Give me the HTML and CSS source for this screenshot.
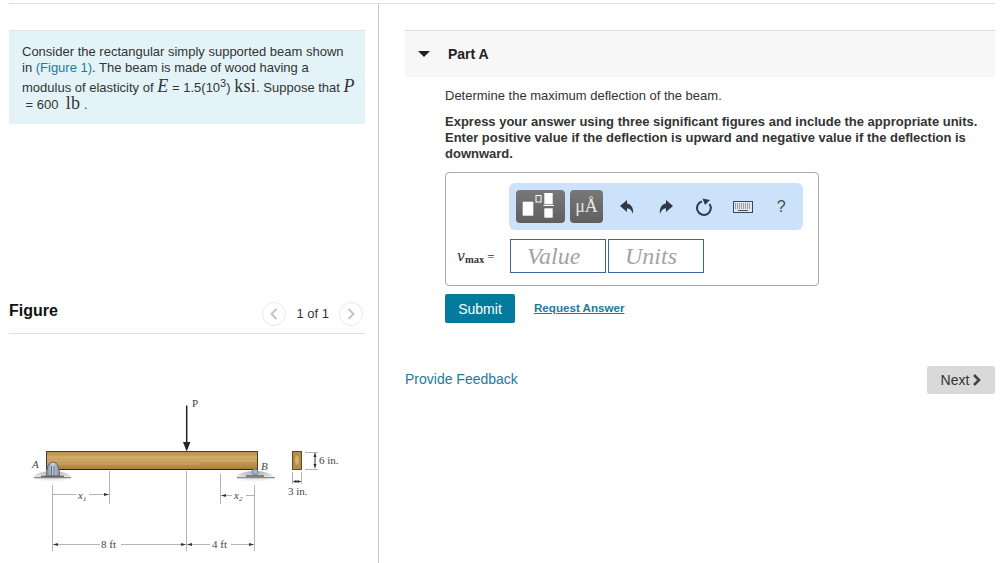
FILE: index.html
```html
<!DOCTYPE html>
<html lang="en">
<head>
    <meta charset="UTF-8">
    <meta name="viewport" content="width=device-width, initial-scale=1.0">
    <title>Part A</title>
    <link rel="stylesheet" href="styles.css">
</head>
<body>

<div class="top-rule"></div>

<div class="columns">
    <div class="left-col">
        <div class="intro">
            <div class="intro-line">Consider the rectangular simply supported beam shown</div>
            <div class="intro-line">in <a class="link">(Figure 1)</a>. The beam is made of wood having a</div>
            <div class="intro-line tall">modulus of elasticity of <i class="math">E</i> = 1.5(10<sup>3</sup>) <span class="math">ksi</span>. Suppose that <i class="math">P</i></div>
            <div class="intro-line last">&nbsp;= 600 &nbsp;<span class="math">lb</span> .</div>
        </div>

        <div class="figure-head">
            <h2>Figure</h2>
            <div class="pager">
                <span class="pager-btn">
                    <svg width="8" height="12" viewBox="0 0 8 12"><path d="M6.5 1 1.5 6l5 5" fill="none" stroke="#c4c4c4" stroke-width="2"/></svg>
                </span>
                <span class="pager-text">1 of 1</span>
                <span class="pager-btn">
                    <svg width="8" height="12" viewBox="0 0 8 12"><path d="M1.5 1l5 5-5 5" fill="none" stroke="#c4c4c4" stroke-width="2"/></svg>
                </span>
            </div>
        </div>

        <svg class="beam-figure" width="360" height="173" viewBox="0 390 360 173">
            <defs>
                <linearGradient id="wood" x1="0" y1="0" x2="0" y2="1">
                    <stop offset="0" stop-color="#b98d45"/>
                    <stop offset="0.35" stop-color="#d0a765"/>
                    <stop offset="0.6" stop-color="#c39a55"/>
                    <stop offset="1" stop-color="#a87c36"/>
                </linearGradient>
                <linearGradient id="metal" x1="0" y1="0" x2="1" y2="0">
                    <stop offset="0" stop-color="#7d8d9b"/>
                    <stop offset="0.5" stop-color="#c3d2df"/>
                    <stop offset="1" stop-color="#7d8d9b"/>
                </linearGradient>
                <radialGradient id="shade" cx="0.5" cy="0" r="0.8">
                    <stop offset="0" stop-color="#a8a8a8"/>
                    <stop offset="1" stop-color="#ffffff"/>
                </radialGradient>
            </defs>

            <!-- extension lines -->
            <g stroke="#b4b4b4" stroke-width="1">
                <path d="M52.5 478V551M109.5 471V504M186.5 471V551M220.5 474V504M254.5 480V551"/>
                <path d="M53 494.5H76M89 494.5H109M221 495.5H232M246 495.5H254"/>
                <path d="M53 544.5H100M121 544.5H186M187 544.5H210M231 544.5H254"/>
                <path d="M305 452.5H318M305 469.5H318M292.5 472V484M301.5 472V484"/>
            </g>

            <!-- dimension arrow heads -->
            <g fill="#333">
                <path d="M109 494.5l-5-1.500v3zM221 495.5l5-1.500v3zM53 544.5l5-1.500v3zM186 544.5l-5-1.500v3zM187 544.5l5-1.500v3zM254 544.5l-5-1.500v3z"/>
                <path d="M315 452l-1.500 5h3zM315 469l-1.500-5h3z"/>
                <path d="M292.500 481.500l4-1.500v3zM301.500 481.500l-4-1.500v3z"/>
            </g>
            <path d="M315 456V465M296 481.500H298" stroke="#333" stroke-width="1"/>

            <!-- beam -->
            <rect x="46.500" y="451.500" width="211" height="18" fill="url(#wood)" stroke="#4a3d22" stroke-width="1"/>
            <path d="M47 457H257M47 461H257M47 464H200" stroke="#dcbc85" stroke-width="0.800" opacity="0.700"/>
            <path d="M47 469.500H257" stroke="#2e2610" stroke-width="1.200"/>

            <!-- load -->
            <path d="M186.700 405.500V444" stroke="#222" stroke-width="1.500"/>
            <path d="M183 442h7.400l-3.700 9.500z" fill="#222"/>

            <!-- support A -->
            <ellipse cx="52.500" cy="478" rx="19" ry="7" fill="url(#shade)"/>
            <path d="M46.500 476c0-4 0.500-14 6.500-14s6.500 10 6.500 14z" fill="url(#metal)" stroke="#556" stroke-width="0.800"/>
            <path d="M51.500 466V476M54 466V476" stroke="#4d5a66" stroke-width="0.800"/>
            <path d="M41 476.500H64" stroke="#666" stroke-width="1.500"/>
            <path d="M34 477.700H71" stroke="#777" stroke-width="1"/>

            <!-- support B -->
            <ellipse cx="255" cy="478" rx="19" ry="7" fill="url(#shade)"/>
            <circle cx="255" cy="472" r="3" fill="#9db6cf" stroke="#566" stroke-width="0.600"/>
            <path d="M246 476H264" stroke="#666" stroke-width="1.500"/>
            <path d="M237 477.700H275" stroke="#777" stroke-width="1"/>

            <!-- cross section -->
            <rect x="292.500" y="451.500" width="9" height="18" fill="#b98d45" stroke="#5a4a28" stroke-width="1"/>
            <ellipse cx="297" cy="460" rx="2" ry="4.500" fill="#d6ae6e"/>

            <!-- labels -->
            <g class="fig-text">
                <text x="192" y="407">P</text>
                <text x="32" y="468" class="fig-italic">A</text>
                <text x="261" y="470" class="fig-italic">B</text>
                <text x="78" y="499" class="fig-italic">x<tspan class="fig-sub" dy="2">1</tspan></text>
                <text x="234" y="499" class="fig-italic">x<tspan class="fig-sub" dy="2">2</tspan></text>
                <text x="101" y="548">8 ft</text>
                <text x="212" y="548">4 ft</text>
                <text x="319" y="464">6 in.</text>
                <text x="288" y="495">3 in.</text>
            </g>
        </svg>
    </div>

    <div class="right-col">
        <div class="part-head">
            <span class="caret"></span>
            <h3>Part A</h3>
        </div>

        <div class="part-body">
            <p class="question">Determine the maximum deflection of the beam.</p>
            <p class="instructions">Express your answer using three significant figures and include the appropriate units. Enter positive value if the deflection is upward and negative value if the deflection is downward.</p>

            <div class="answer-box">
                <div class="toolbar">
                    <span class="tool-btn tool-templates">
                        <svg width="49" height="33" viewBox="0 0 49 33">
                            <rect x="6.700" y="11.700" width="10.600" height="14" fill="#fff"/>
                            <rect x="20" y="5.500" width="5" height="6.500" fill="none" stroke="#fff" stroke-width="1"/>
                            <rect x="28.300" y="3" width="8.400" height="11.300" fill="#fff"/>
                            <rect x="27.500" y="15" width="10.500" height="1" fill="#fff"/>
                            <rect x="28.300" y="18.300" width="8.400" height="9.400" fill="#fff"/>
                        </svg>
                    </span>
                    <span class="tool-btn tool-units">μÅ</span>
                    <span class="tool-icon">
                        <svg width="14" height="14" viewBox="0 0 14 14"><path d="M7 0 0 6l7 6V8.500c3 0 4.500 1.500 6 5.500 1-6-2-10-6-10.500z" fill="#2f3a46"/></svg>
                    </span>
                    <span class="tool-icon">
                        <svg width="14" height="14" viewBox="0 0 14 14"><path d="M7 0l7 6-7 6V8.500c-3 0-4.500 1.500-6 5.500-1-6 2-10 6-10.500z" fill="#2f3a46"/></svg>
                    </span>
                    <span class="tool-icon">
                        <svg width="18" height="20" viewBox="0 0 18 20"><path d="M7 4.400A6.900 6.900 0 1 0 14.500 7" fill="none" stroke="#2f3a46" stroke-width="2"/><path d="M7.500 1.500l7.500 1.500-5 5z" fill="#2f3a46"/></svg>
                    </span>
                    <span class="tool-icon">
                        <svg width="20" height="12" viewBox="0 0 20 12">
                            <rect x="0.500" y="0.500" width="19" height="11" fill="#e3e8ee" stroke="#3b4652"/>
                            <path d="M2 3H18M2 5H18M2 7H18" stroke="#47525e" stroke-width="1" stroke-dasharray="1 1"/>
                            <path d="M5 9.500H15" stroke="#47525e"/>
                        </svg>
                    </span>
                    <span class="tool-icon tool-help">?</span>
                </div>

                <div class="answer-row">
                    <span class="answer-label"><i class="answer-var">v</i><b>max</b> <span class="equals">=</span></span>
                    <span class="answer-input">Value</span>
                    <span class="answer-input units">Units</span>
                </div>
            </div>

            <div class="actions">
                <button class="submit">Submit</button>
                <a class="request">Request Answer</a>
            </div>
        </div>

        <div class="bottom-row">
            <a class="feedback">Provide Feedback</a>
            <button class="next">Next
                <svg width="9" height="12" viewBox="0 0 9 12"><path d="M2 1l5 5-5 5" fill="none" stroke="#444" stroke-width="2.600"/></svg>
            </button>
        </div>
    </div>
</div>

</body>
</html>
```

FILE: styles.css
```css
body {
    font-family: 'Liberation Sans', Arial, sans-serif;
    font-size: 14px;
    color: #333;
    background-color: white;
    margin: 0;
    padding: 0;
    height: 563px;
    overflow: hidden;
}

a {
    color: #1c7a9c;
}

.top-rule {
    height: 1px;
    margin: 3px 5px 0 9px;
    background-color: #dedede;
}

.columns {
    display: flex;
    height: 559px;
}

/* Left column */
.left-col {
    width: 356px;
    padding: 0 13px 0 9px;
    border-right: 1px solid #ccc;
}

.intro {
    margin-top: 26px;
    height: 80px;
    padding-top: 13px;
    padding-left: 13px;
    background-color: #e4f3f7;
    border-top: 1px solid #dde6e8;
    font-size: 13px;
    line-height: 16px;
    white-space: nowrap;
}

.intro-line {
    height: 16px;
}

.intro-line.tall {
    margin-top: 2px;
}

.intro-line.last {
    margin-top: 1px;
}

.math {
    font-family: 'Liberation Serif', serif;
    font-size: 18px;
    letter-spacing: 0.3px;
}

sup {
    font-size: 11px;
    line-height: 0;
}

.figure-head {
    display: flex;
    justify-content: space-between;
    align-items: center;
    height: 47px;
    margin-top: 162px;
    border-bottom: 1px solid #dedede;
}

.figure-head h2 {
    margin: 3px 0 0;
    font-size: 16px;
    color: #111;
}

.pager {
    display: flex;
    align-items: center;
    gap: 10px;
    margin-top: 8px;
    margin-right: 2px;
    font-size: 13px;
}

.pager-btn {
    display: flex;
    justify-content: center;
    align-items: center;
    width: 22px;
    height: 22px;
    border: 1px solid #eaeaea;
    border-radius: 50%;
}

.beam-figure {
    display: block;
    margin-left: -9px;
    margin-top: 56px;
}

.fig-text text {
    font-family: 'Liberation Serif', serif;
    font-size: 11px;
    fill: #444;
}

.fig-text .fig-italic {
    font-style: italic;
}

.fig-text .fig-sub {
    font-size: 7px;
}

/* Right column */
.right-col {
    width: 590px;
    margin-left: 26px;
}

.part-head {
    display: flex;
    align-items: center;
    height: 46px;
    margin-top: 26px;
    background-color: #f7f7f7;
    border-top: 1px solid #dedede;
}

.caret {
    width: 0;
    height: 0;
    margin-left: 13px;
    border-left: 6px solid transparent;
    border-right: 6px solid transparent;
    border-top: 6px solid #222;
}

.part-head h3 {
    margin: 0 0 0 18px;
    font-size: 14px;
    color: #222;
}

.part-body {
    padding-left: 40px;
}

.question {
    margin: 11px 0 0;
    line-height: 16px;
    font-size: 13px;
}

.instructions {
    margin: 10px 0 0;
    font-weight: bold;
    font-size: 13px;
    line-height: 16px;
}

.answer-box {
    width: 372px;
    height: 112px;
    margin-top: 10px;
    border: 1px solid #aaa;
    border-radius: 4px;
}

.toolbar {
    display: flex;
    align-items: center;
    width: 294px;
    height: 47px;
    margin: 10px 0 0 63px;
    background-color: #cce2fb;
    border-radius: 6px;
}

.tool-btn {
    display: flex;
    justify-content: center;
    align-items: center;
    height: 33px;
    border-radius: 4px;
    background: linear-gradient(#787878, #5f5f5f);
    color: #fff;
}

.tool-templates {
    width: 49px;
    margin-left: 7px;
}

.tool-units {
    width: 33px;
    margin-left: 5px;
    margin-right: 5px;
    font-family: 'Liberation Serif', serif;
    font-size: 18px;
    color: #e6e6e6;
}

.tool-icon {
    display: flex;
    justify-content: center;
    align-items: center;
    width: 38.500px;
}

.tool-help {
    font-size: 16px;
    color: #3d4a57;
}

.answer-row {
    display: flex;
    align-items: center;
    margin: 9px 0 0 11px;
}

.answer-label {
    width: 53px;
    font-family: 'Liberation Serif', serif;
    font-size: 12px;
}

.answer-var {
    font-family: 'DejaVu Serif', serif;
    font-size: 14px;
}

.answer-label b {
    font-size: 10.500px;
    vertical-align: -2px;
}

.equals {
    font-size: 13px;
}

.answer-input {
    width: 78px;
    height: 32px;
    padding-left: 16px;
    border: 1px solid #3f62a8;
    font-family: 'Liberation Serif', serif;
    font-style: italic;
    font-size: 24px;
    line-height: 32px;
    color: #a3a3a3;
}

.answer-input.units {
    margin-left: 2px;
}

.actions {
    display: flex;
    align-items: center;
    margin-top: 8px;
}

.submit {
    width: 70px;
    height: 29px;
    padding: 0;
    border: none;
    border-radius: 2px;
    background-color: #007b9e;
    color: #fff;
    font-family: inherit;
    font-size: 14px;
}

.request {
    margin-left: 19px;
    margin-bottom: 2px;
    font-size: 11.600px;
    font-weight: bold;
    text-decoration: underline;
}

.bottom-row {
    display: flex;
    justify-content: space-between;
    margin-top: 43px;
}

.feedback {
    margin-top: 5px;
    font-size: 14px;
}

.next {
    display: flex;
    justify-content: center;
    align-items: center;
    gap: 3px;
    width: 68px;
    height: 28px;
    padding: 0;
    border: none;
    border-radius: 2px;
    background-color: #d9d9d9;
    color: #333;
    font-family: inherit;
    font-size: 14px;
}
```
